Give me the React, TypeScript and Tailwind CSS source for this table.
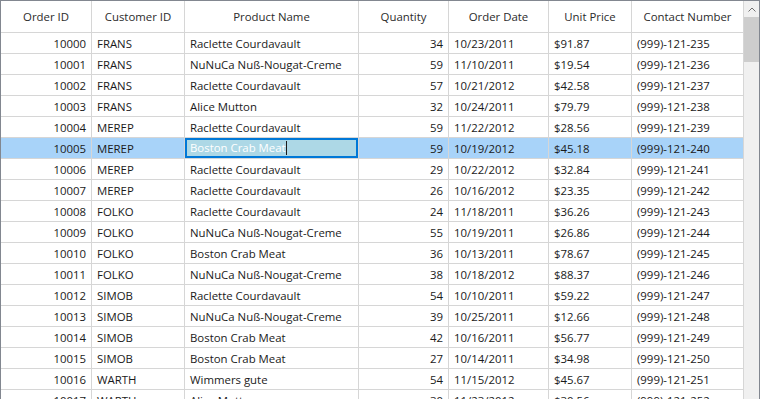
import React from "react";

type Order = {
  id: number;
  customer: string;
  product: string;
  qty: number;
  date: string;
  price: string;
  contact: string;
};

const rows: Order[] = [
  { id: 10000, customer: "FRANS", product: "Raclette Courdavault", qty: 34, date: "10/23/2011", price: "$91.87", contact: "(999)-121-235" },
  { id: 10001, customer: "FRANS", product: "NuNuCa Nuß-Nougat-Creme", qty: 59, date: "11/10/2011", price: "$19.54", contact: "(999)-121-236" },
  { id: 10002, customer: "FRANS", product: "Raclette Courdavault", qty: 57, date: "10/21/2012", price: "$42.58", contact: "(999)-121-237" },
  { id: 10003, customer: "FRANS", product: "Alice Mutton", qty: 32, date: "10/24/2011", price: "$79.79", contact: "(999)-121-238" },
  { id: 10004, customer: "MEREP", product: "Raclette Courdavault", qty: 59, date: "11/22/2012", price: "$28.56", contact: "(999)-121-239" },
  { id: 10005, customer: "MEREP", product: "Boston Crab Meat", qty: 59, date: "10/19/2012", price: "$45.18", contact: "(999)-121-240" },
  { id: 10006, customer: "MEREP", product: "Raclette Courdavault", qty: 29, date: "10/22/2012", price: "$32.84", contact: "(999)-121-241" },
  { id: 10007, customer: "MEREP", product: "Raclette Courdavault", qty: 26, date: "10/16/2012", price: "$23.35", contact: "(999)-121-242" },
  { id: 10008, customer: "FOLKO", product: "Raclette Courdavault", qty: 24, date: "11/18/2011", price: "$36.26", contact: "(999)-121-243" },
  { id: 10009, customer: "FOLKO", product: "NuNuCa Nuß-Nougat-Creme", qty: 55, date: "10/19/2011", price: "$26.86", contact: "(999)-121-244" },
  { id: 10010, customer: "FOLKO", product: "Boston Crab Meat", qty: 36, date: "10/13/2011", price: "$78.67", contact: "(999)-121-245" },
  { id: 10011, customer: "FOLKO", product: "NuNuCa Nuß-Nougat-Creme", qty: 38, date: "10/18/2012", price: "$88.37", contact: "(999)-121-246" },
  { id: 10012, customer: "SIMOB", product: "Raclette Courdavault", qty: 54, date: "10/10/2011", price: "$59.22", contact: "(999)-121-247" },
  { id: 10013, customer: "SIMOB", product: "NuNuCa Nuß-Nougat-Creme", qty: 39, date: "10/25/2011", price: "$12.66", contact: "(999)-121-248" },
  { id: 10014, customer: "SIMOB", product: "Boston Crab Meat", qty: 42, date: "10/16/2011", price: "$56.77", contact: "(999)-121-249" },
  { id: 10015, customer: "SIMOB", product: "Boston Crab Meat", qty: 27, date: "10/14/2011", price: "$34.98", contact: "(999)-121-250" },
  { id: 10016, customer: "WARTH", product: "Wimmers gute", qty: 54, date: "11/15/2012", price: "$45.67", contact: "(999)-121-251" },
  { id: 10017, customer: "WARTH", product: "Alice Mutton", qty: 30, date: "11/23/2012", price: "$30.56", contact: "(999)-121-252" },
];

const headers = ["Order ID", "Customer ID", "Product Name", "Quantity", "Order Date", "Unit Price", "Contact Number"];
const cols = "grid grid-cols-[91px_93px_174px_90px_100px_83px_112px]";
const cell = "h-[21px] border-r border-b border-[#d6d6d6] px-[5px] leading-[21px] whitespace-nowrap overflow-hidden";

export default function App() {
  return (
    <div className="w-[760px] h-[399px] overflow-hidden bg-white border-l border-t border-r border-[#828790] flex font-['Open_Sans','Noto_Sans',sans-serif] text-[11.4px] text-[#1a1a1a]">
      <div className="w-[743px] shrink-0">
        {/* header */}
        <div className={cols}>
          {headers.map((h) => (
            <div key={h} className="h-[32px] border-r border-b border-[#d6d6d6] flex items-center justify-center text-[#2b2b2b] whitespace-nowrap">
              {h}
            </div>
          ))}
        </div>

        {/* body */}
        {rows.map((r) => {
          const selected = r.id === 10005;
          return (
            <div key={r.id} className={`${cols} ${selected ? "bg-[#a8d3f9]" : ""}`}>
              <div className={`${cell} text-right`}>{r.id}</div>
              <div className={cell}>{r.customer}</div>
              {selected ? (
                <div className="h-[21px] border-r border-b border-[#d6d6d6]">
                  <div className="h-[20px] border-2 border-[#0078d7] bg-[#add8e6] px-[3px] text-white flex items-center">
                    <span>{r.product}</span>
                    <span className="w-px h-[14px] bg-[#1a1a1a]" />
                  </div>
                </div>
              ) : (
                <div className={cell}>{r.product}</div>
              )}
              <div className={`${cell} text-right`}>{r.qty}</div>
              <div className={cell}>{r.date}</div>
              <div className={cell}>{r.price}</div>
              <div className={cell}>{r.contact}</div>
            </div>
          );
        })}
      </div>

      {/* vertical scrollbar */}
      <div className="w-[15px] shrink-0 bg-[#f0f0f0] flex flex-col">
        <div className="h-[16px] flex items-center justify-center">
          <svg width="8" height="5" viewBox="0 0 8 5">
            <path d="M0.5 4.5 L4 1 L7.5 4.5" fill="none" stroke="#707070" strokeWidth="1" />
          </svg>
        </div>
        <div className="h-[45px] bg-[#cdcdcd]" />
      </div>
    </div>
  );
}
